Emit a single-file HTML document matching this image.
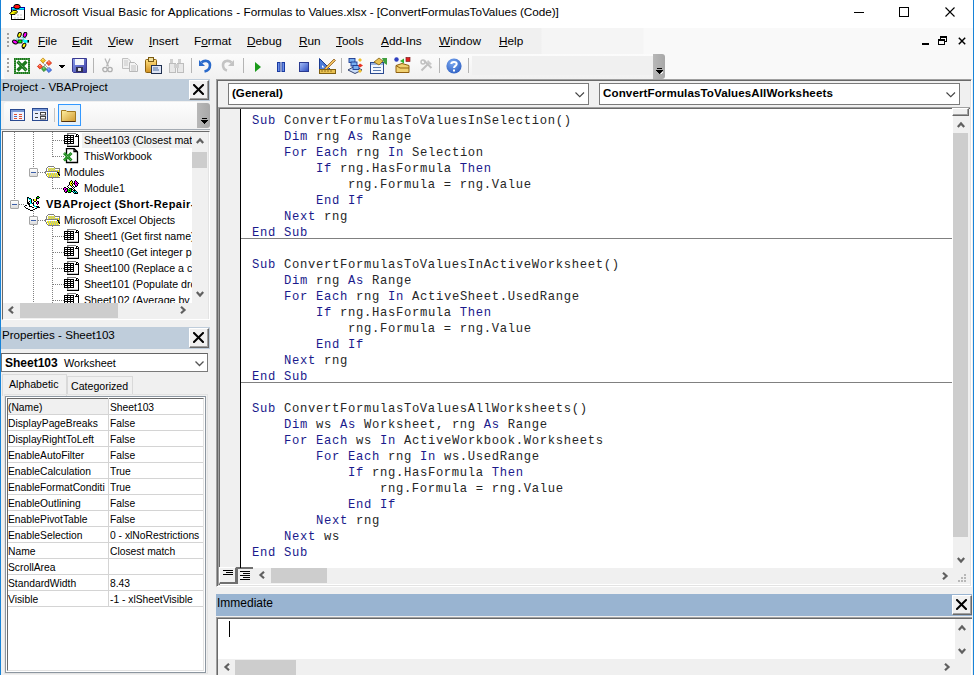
<!DOCTYPE html><html><head><meta charset="utf-8"><style>
*{margin:0;padding:0;box-sizing:border-box}
html,body{width:974px;height:675px;overflow:hidden;background:#f0f0f0}
body{position:relative;font-family:"Liberation Sans",sans-serif;font-size:12px;color:#000}
div,svg{position:absolute}
.t{white-space:pre;line-height:16px}
.s{font-size:10.3px}
.code{font-family:"Liberation Mono",monospace;font-size:12.2px;letter-spacing:0.68px;white-space:pre;line-height:16px;color:#262626}
.k{color:#1a1a8c}
u{text-decoration:underline;text-decoration-thickness:1px;text-underline-offset:1px}
.clip{overflow:hidden}
</style></head><body>
<div style="left:0px;top:0px;width:974px;height:28px;background:#fff"></div>
<div style="left:0px;top:0px;width:1px;height:675px;background:#1883d7"></div>
<div style="left:973px;top:0px;width:1px;height:675px;background:#1883d7"></div>
<div class="t" style="left:30px;top:4px;font-size:11.75px"><span style="letter-spacing:0.13px">Microsoft Visual Basic for Applications - </span><span style="letter-spacing:-0.04px">Formulas to Values.xlsx - [ConvertFormulasToValues (Code)]</span></div>
<div style="left:854px;top:12px;width:10px;height:1px;background:#000"></div>
<div style="left:899px;top:7px;width:10px;height:10px;border:1px solid #000"></div>
<svg style="left:945px;top:7px;" width="10" height="10" viewBox="0 0 10 10"><path d="M0.5 0.5L9.5 9.5M9.5 0.5L0.5 9.5" stroke="#000" stroke-width="1.1"/></svg>
<svg style="left:8px;top:3px;" width="18" height="18" viewBox="0 0 18 18"><rect x="3.5" y="4.5" width="13" height="12" fill="#fff" stroke="#000"/><rect x="3" y="4" width="14" height="3" fill="#0000a0"/><rect x="4" y="5" width="12" height="1.6" fill="#00ffff"/><circle cx="10" cy="12" r="0.7" fill="#b0b0b0"/><circle cx="13" cy="12" r="0.7" fill="#b0b0b0"/><circle cx="7" cy="15" r="0.7" fill="#b0b0b0"/><circle cx="10" cy="15" r="0.7" fill="#b0b0b0"/><circle cx="13" cy="15" r="0.7" fill="#b0b0b0"/><ellipse cx="9" cy="3.6" rx="3.2" ry="2.2" fill="#ff1010" stroke="#000" stroke-width="1"/><path d="M1.5 10.5L5 7.5H8.5L9.5 9L7 11.5H3Z" fill="#ffff00" stroke="#000" stroke-width="0.9"/><path d="M5 10L9 8.5L8 11Z" fill="#808000"/></svg>
<div style="left:1px;top:28px;width:972px;height:51px;background:#f9f9f9"></div>
<div style="left:1px;top:28px;width:643px;height:26px;background:linear-gradient(to right,#f0f0f0 0,#f0f0f0 540px,#f5f5f5 541px,#f5f5f5 642px,#f9f9f9 643px)"></div>
<div class="t" style="left:38px;top:33px;font-size:11.8px"><u>F</u>ile</div>
<div class="t" style="left:72px;top:33px;font-size:11.8px"><u>E</u>dit</div>
<div class="t" style="left:108px;top:33px;font-size:11.8px"><u>V</u>iew</div>
<div class="t" style="left:149px;top:33px;font-size:11.8px"><u>I</u>nsert</div>
<div class="t" style="left:194px;top:33px;font-size:11.8px">F<u>o</u>rmat</div>
<div class="t" style="left:247px;top:33px;font-size:11.8px"><u>D</u>ebug</div>
<div class="t" style="left:299px;top:33px;font-size:11.8px"><u>R</u>un</div>
<div class="t" style="left:336px;top:33px;font-size:11.8px"><u>T</u>ools</div>
<div class="t" style="left:381px;top:33px;font-size:11.8px"><u>A</u>dd-Ins</div>
<div class="t" style="left:439px;top:33px;font-size:11.8px"><u>W</u>indow</div>
<div class="t" style="left:499px;top:33px;font-size:11.8px"><u>H</u>elp</div>
<div style="left:7px;top:33px;width:2px;height:2px;background:#a0a0a0"></div>
<div style="left:7px;top:37px;width:2px;height:2px;background:#a0a0a0"></div>
<div style="left:7px;top:41px;width:2px;height:2px;background:#a0a0a0"></div>
<div style="left:7px;top:45px;width:2px;height:2px;background:#a0a0a0"></div>
<div style="left:922px;top:43px;width:7px;height:2px;background:#000"></div>
<svg style="left:938px;top:36px;" width="9" height="9" viewBox="0 0 9 9" shape-rendering="crispEdges"><path d="M2.5 2.5V0.5H8.5V5.5H6.5M2.5 1.5H8.5M0.5 3.5H6.5V8.5H0.5ZM0.5 4.5H6.5" stroke="#000" fill="none"/></svg>
<svg style="left:958px;top:37px;" width="8" height="8" viewBox="0 0 8 8"><path d="M0.8 0.8L7.2 7.2M7.2 0.8L0.8 7.2" stroke="#000" stroke-width="1.45"/></svg>
<svg style="left:12px;top:32px;" width="17" height="17" viewBox="0 0 17 17"><path d="M3 9L7 5M10 9L14 5M7 9H15M10 5L14 12" stroke="#00e0e0" stroke-width="1.4" stroke-dasharray="1 1"/><ellipse cx="7.5" cy="2.8" rx="1.6" ry="2.6" transform="rotate(20 7.5 2.8)" fill="#ffff00" stroke="#000" stroke-width="1"/><ellipse cx="13" cy="2.8" rx="1.6" ry="2.6" transform="rotate(20 13 2.8)" fill="#ff00ff" stroke="#000" stroke-width="1"/><ellipse cx="3" cy="10" rx="2.6" ry="1.7" transform="rotate(30 3 10)" fill="#ff00ff" stroke="#000" stroke-width="1"/><rect x="6" y="8" width="4" height="3" fill="#00ff00" stroke="#000" stroke-width="0.8"/><rect x="12" y="8" width="4" height="2.6" fill="#00ffff"/><rect x="15.5" y="8" width="1.5" height="2.6" fill="#000"/><ellipse cx="12" cy="13.5" rx="1.6" ry="2.4" transform="rotate(30 12 13.5)" fill="#ffff00" stroke="#000" stroke-width="1"/><rect x="10.5" y="15.5" width="2" height="1.5" fill="#000"/></svg>
<div style="left:4px;top:54px;width:649px;height:25px;background:linear-gradient(#fcfcfc,#f1f1f1);border-radius:3px 0 0 3px"></div>
<div style="left:472px;top:56px;width:181px;height:19px;background:#f0f0f0"></div>
<div style="left:653px;top:54px;width:12px;height:25px;background:linear-gradient(to right,#b8b8b8,#a8a8a8);border-radius:0 3px 3px 0"></div>
<svg style="left:656px;top:68px;" width="7" height="8" viewBox="0 0 7 8" shape-rendering="crispEdges"><rect x="1" y="0" width="5" height="1" fill="#000"/><path d="M0 2H7L3.5 6Z" fill="#000"/><path d="M4 6L7 3V5Z" fill="#fff"/></svg>
<div style="left:7px;top:58px;width:2px;height:2px;background:#a0a0a0"></div>
<div style="left:7px;top:62px;width:2px;height:2px;background:#a0a0a0"></div>
<div style="left:7px;top:66px;width:2px;height:2px;background:#a0a0a0"></div>
<div style="left:7px;top:70px;width:2px;height:2px;background:#a0a0a0"></div>
<div style="left:93px;top:58px;width:1px;height:15px;background:#b4b4b4"></div>
<div style="left:191px;top:58px;width:1px;height:15px;background:#b4b4b4"></div>
<div style="left:243px;top:58px;width:1px;height:15px;background:#b4b4b4"></div>
<div style="left:341px;top:58px;width:1px;height:15px;background:#b4b4b4"></div>
<div style="left:439px;top:58px;width:1px;height:15px;background:#b4b4b4"></div>
<div style="left:468px;top:58px;width:1px;height:15px;background:#b4b4b4"></div>
<svg style="left:14px;top:58px;" width="16" height="16" viewBox="0 0 16 16"><rect x="1" y="1" width="14" height="14" fill="#fff" stroke="#1a7a1a" stroke-width="2"/><rect x="1" y="1" width="14" height="14" fill="none" stroke="#fff" stroke-width="0.6" stroke-dasharray="1 1" opacity="0.7"/><path d="M3.5 3.5L12.5 12.5M12.5 3.5L3.5 12.5" stroke="#1a7a1a" stroke-width="3.2"/><path d="M4 4L12 12" stroke="#a0d0a0" stroke-width="0.8" stroke-dasharray="1 1"/></svg>
<svg style="left:36px;top:57px;" width="18" height="17" viewBox="0 0 18 17"><path d="M6 5L12 11M12 5L6 11" stroke="#909090" stroke-width="0.8"/><path d="M7 0.8999999999999999L9.6 3.5L7 6.1L4.4 3.5Z" fill="#f0c020" stroke="#c08000" stroke-width="0.7"/><rect x="6.2" y="1.9" width="1.2" height="1.2" fill="#fff" opacity="0.6"/><path d="M13 3.4L15.6 6L13 8.6L10.4 6Z" fill="#ff5030" stroke="#c02000" stroke-width="0.7"/><rect x="12.2" y="4.4" width="1.2" height="1.2" fill="#fff" opacity="0.6"/><path d="M4 6.9L6.6 9.5L4 12.1L1.4 9.5Z" fill="#ff5030" stroke="#c02000" stroke-width="0.7"/><rect x="3.2" y="7.9" width="1.2" height="1.2" fill="#fff" opacity="0.6"/><path d="M8 9.4L10.6 12L8 14.6L5.4 12Z" fill="#40b040" stroke="#207020" stroke-width="0.7"/><rect x="7.2" y="10.4" width="1.2" height="1.2" fill="#fff" opacity="0.6"/><path d="M13 10.4L15.6 13L13 15.6L10.4 13Z" fill="#5080f0" stroke="#2040b0" stroke-width="0.7"/><rect x="12.2" y="11.4" width="1.2" height="1.2" fill="#fff" opacity="0.6"/></svg>
<svg style="left:59px;top:65px;" width="6" height="4" viewBox="0 0 6 4" shape-rendering="crispEdges"><path d="M0 0H6V1H5V2H4V3H2V2H1V1H0Z" fill="#000"/></svg>
<svg style="left:72px;top:58px;" width="15" height="15" viewBox="0 0 15 15"><defs><linearGradient id="fl" x1="0" y1="0" x2="1" y2="1"><stop offset="0" stop-color="#8aa0f0"/><stop offset="1" stop-color="#3a3aa0"/></linearGradient></defs><path d="M0.5 0.5H14.5V14.5H1.5L0.5 13.5Z" fill="url(#fl)" stroke="#3a3a90"/><rect x="3" y="1" width="9" height="6" fill="#f4f6fb"/><rect x="4" y="9" width="7" height="5" fill="#303050"/><rect x="6" y="10" width="3" height="3" fill="#e0e0e0"/></svg>
<svg style="left:102px;top:58px;" width="11" height="15" viewBox="0 0 11 15"><path d="M3 0.5L6.5 8.5M8 0.5L4.5 8.5" stroke="#b8b8b8" stroke-width="1.3" fill="none"/><circle cx="3" cy="11.5" r="2.2" fill="none" stroke="#b0b0b0" stroke-width="1.3"/><circle cx="8" cy="11.5" r="2.2" fill="none" stroke="#b0b0b0" stroke-width="1.3"/></svg>
<svg style="left:122px;top:58px;" width="16" height="14" viewBox="0 0 16 14"><path d="M0.5 0.5H6L8.5 3V10.5H0.5Z" fill="#f0f0f0" stroke="#c0c0c0"/><path d="M2 3H6M2 5H6M2 7H6" stroke="#c8c8c8"/><path d="M7.5 4.5H12.5L15.5 7.5V13.5H7.5Z" fill="#f4f4f4" stroke="#b8b8b8"/><path d="M9 8H14M9 10H14M9 12H14" stroke="#c0c0c0"/></svg>
<svg style="left:145px;top:57px;" width="17" height="17" viewBox="0 0 17 17"><defs><linearGradient id="pc" x1="0" y1="0" x2="0" y2="1"><stop offset="0" stop-color="#ffe080"/><stop offset="1" stop-color="#d09020"/></linearGradient></defs><rect x="0.5" y="2.5" width="11" height="13" rx="1" fill="url(#pc)" stroke="#8a6010"/><rect x="3.5" y="0.5" width="5" height="4" fill="#f0e0a0" stroke="#7a5a10"/><rect x="6.5" y="8.5" width="10" height="8" fill="#dde4f4" stroke="#203050"/><path d="M8 11H13M8 13H14" stroke="#5070a0"/></svg>
<svg style="left:169px;top:58px;" width="16" height="15" viewBox="0 0 16 15"><rect x="1" y="1" width="3" height="4" fill="#d0d0d0"/><rect x="9" y="1" width="3" height="4" fill="#d0d0d0"/><rect x="0.5" y="5.5" width="6" height="9" fill="#e8e8e8" stroke="#bdbdbd"/><rect x="8.5" y="5.5" width="6" height="9" fill="#e8e8e8" stroke="#bdbdbd"/><rect x="5" y="6" width="5" height="4" fill="#cfcfcf"/></svg>
<svg style="left:199px;top:59px;" width="13" height="14" viewBox="0 0 13 14"><path d="M2.5 3.5C5 1 11 1 11 6C11 10 8 12 5.5 12.5" stroke="#2a6acb" stroke-width="2.6" fill="none"/><path d="M0 1V7H6Z" fill="#2a6acb"/></svg>
<svg style="left:221px;top:59px;" width="13" height="13" viewBox="0 0 13 13"><path d="M10.5 3.5C8 1 2 1 2 6C2 9 4 11 6 11.5" stroke="#c4c4c4" stroke-width="2.6" fill="none"/><path d="M13 1V7H7Z" fill="#c4c4c4"/></svg>
<svg style="left:255px;top:62px;shape-rendering:auto" width="6" height="10" viewBox="0 0 6 10" shape-rendering="crispEdges"><path d="M0 0L6 5L0 10Z" fill="#1a9a1a"/></svg>
<svg style="left:277px;top:62px;" width="8" height="10" viewBox="0 0 8 10"><rect x="0.5" y="0.5" width="2.5" height="9" fill="#6a8ee8" stroke="#1a3aa0"/><rect x="5" y="0.5" width="2.5" height="9" fill="#6a8ee8" stroke="#1a3aa0"/></svg>
<svg style="left:299px;top:62px;" width="10" height="10" viewBox="0 0 10 10"><defs><linearGradient id="st" x1="0" y1="0" x2="1" y2="1"><stop offset="0" stop-color="#a8c0f8"/><stop offset="1" stop-color="#2a4ac0"/></linearGradient></defs><rect x="0.5" y="0.5" width="9" height="9" fill="url(#st)" stroke="#2a3a90"/></svg>
<svg style="left:319px;top:57px;" width="17" height="17" viewBox="0 0 17 17"><path d="M0.5 1.5V12.5H11.5Z" fill="#4a7ad8" stroke="#1a3a90"/><path d="M3 8V10.5H5.5Z" fill="#fff"/><path d="M6 11L15 2L16.5 3.5L7.5 12.5L5.5 13Z" fill="#f0c060" stroke="#906020" stroke-width="0.8"/><rect x="0.5" y="12.5" width="16" height="4" fill="#e8c050" stroke="#806010"/><path d="M3 13V15M6 13V15M9 13V15M12 13V15" stroke="#806010" stroke-width="0.8"/></svg>
<svg style="left:347px;top:57px;" width="17" height="17" viewBox="0 0 17 17"><path d="M1 13L8 9L15 13L8 16.5Z" fill="#c8dcf8" stroke="#203060" stroke-width="0.9"/><rect x="2" y="1.5" width="6" height="4" fill="#7ab0f0" stroke="#1a3a90" stroke-width="0.9"/><rect x="4" y="5" width="6" height="4" fill="#7ab0f0" stroke="#1a3a90" stroke-width="0.9"/><rect x="6" y="8.5" width="6" height="4" fill="#7ab0f0" stroke="#1a3a90" stroke-width="0.9"/><path d="M13 1L15 3L13 5L11 3Z" fill="#f0c030"/><path d="M13 12L15 14L13 16L11 14Z" fill="#f0c030"/><path d="M13 6.5L16 8.5L13 10.5L11 8.5Z" fill="#e83020"/></svg>
<svg style="left:370px;top:57px;" width="18" height="17" viewBox="0 0 18 17"><rect x="0.5" y="5.5" width="13" height="11" fill="#f4f8ff" stroke="#2a4a90"/><rect x="1" y="6" width="12" height="2" fill="#9ab4e0"/><path d="M3 10.5H11M3 13.5H11" stroke="#5a7ab0"/><path d="M4 5L9 1L13 4L9 8Z" fill="#e8c050" stroke="#806010" stroke-width="0.8"/><path d="M12 1H17V8L14 6Z" fill="#40a040"/></svg>
<svg style="left:394px;top:57px;" width="17" height="17" viewBox="0 0 17 17"><circle cx="2.5" cy="2.5" r="2.2" fill="#3040c0"/><path d="M10 1.5L6 4L10 6.5Z" fill="#30b030"/><rect x="12" y="0.5" width="4" height="4" fill="#e02020" stroke="#802020" stroke-width="0.7"/><path d="M2 8.5L8 6.5L15 8.5V15.5H2Z" fill="#f0d070" stroke="#906010"/><path d="M2 8.5L6 11H15" stroke="#906010" fill="none"/></svg>
<svg style="left:420px;top:59px;" width="13" height="13" viewBox="0 0 13 13"><path d="M1.5 11.5L9 4M4 1.5L11.5 9" stroke="#c0c0c0" stroke-width="2"/><path d="M8 1L12 5L10 6L7 3Z" fill="#c8c8c8"/><circle cx="3" cy="3" r="2" fill="none" stroke="#c0c0c0" stroke-width="1.5"/></svg>
<svg style="left:446px;top:58px;" width="16" height="16" viewBox="0 0 16 16"><defs><radialGradient id="hg" cx="0.4" cy="0.3" r="0.8"><stop offset="0" stop-color="#7aa8f0"/><stop offset="1" stop-color="#2a5cc0"/></radialGradient></defs><circle cx="8" cy="8" r="7.6" fill="url(#hg)"/><path d="M5.3 6C5.3 3.2 10.7 3.2 10.7 6C10.7 7.8 8 8 8 10" stroke="#fff" stroke-width="2" fill="none"/><rect x="7" y="11.5" width="2" height="2" fill="#fff"/></svg>
<div style="left:1px;top:79px;width:209px;height:22px;background:#bfcddb"></div>
<div class="t" style="left:2px;top:79px;font-size:11.6px">Project - VBAProject</div>
<div style="left:189px;top:80px;width:20px;height:20px;background:#f0f0f0;border-top:1px solid #fff;border-left:1px solid #fff;border-right:1px solid #696969;border-bottom:1px solid #696969;box-shadow:inset -1px -1px 0 #a0a0a0"></div>
<svg style="left:193px;top:84px;" width="11" height="11" viewBox="0 0 11 11"><path d="M1 1L10 10M10 1L1 10" stroke="#000" stroke-width="2" stroke-linecap="square"/></svg>
<div style="left:4px;top:102px;width:193px;height:27px;background:linear-gradient(#fdfdfd,#f1f1f1);border-radius:3px 0 0 3px"></div>
<div style="left:197px;top:103px;width:13px;height:25px;background:linear-gradient(to right,#b8b8b8,#a8a8a8);border-radius:0 3px 3px 0"></div>
<svg style="left:201px;top:118px;" width="7" height="8" viewBox="0 0 7 8" shape-rendering="crispEdges"><rect x="1" y="0" width="5" height="1" fill="#000"/><path d="M0 2H7L3.5 6Z" fill="#000"/></svg>
<div style="left:54px;top:108px;width:1px;height:14px;background:#c5c5c5"></div>
<div style="left:58px;top:104px;width:23px;height:22px;background:#e5f1fb;border:1px solid #3399ff"></div>
<div style="left:1px;top:129px;width:209px;height:1px;background:#a3aab2"></div>
<svg style="left:10px;top:109px;" width="15" height="12" viewBox="0 0 15 12"><rect x="0.5" y="0.5" width="14" height="11" fill="#f0f4ff" stroke="#2a4a90"/><rect x="1" y="1" width="13" height="2" fill="#7a9ad8"/><rect x="1" y="3" width="2" height="8" fill="#a8bce8"/><path d="M4 5.5H7M9 5.5H12M4 7.5H7M9 7.5H12M4 9.5H7M9 9.5H12" stroke="#e05030"/><path d="M4 7.5H7" stroke="#5070c0"/></svg>
<svg style="left:32px;top:108px;" width="16" height="13" viewBox="0 0 16 13"><rect x="0.5" y="0.5" width="15" height="12" fill="#e8eefc" stroke="#2a4a90"/><rect x="1" y="1" width="14" height="2" fill="#7a9ad8"/><path d="M3 5.5H6M3 9.5H6" stroke="#404040"/><rect x="8.5" y="4.5" width="5" height="2.5" fill="#fff" stroke="#404040"/><rect x="8.5" y="8.5" width="5" height="2.5" fill="#fff" stroke="#404040"/></svg>
<svg style="left:61px;top:109px;" width="16" height="13" viewBox="0 0 16 13"><defs><linearGradient id="fg" x1="0" y1="0" x2="1" y2="1"><stop offset="0" stop-color="#fff0a0"/><stop offset="1" stop-color="#d09a30"/></linearGradient></defs><path d="M0.5 1.5H5L6 2.5H14.5V12.5H0.5Z" fill="url(#fg)" stroke="#a07820"/><path d="M0.5 12.5H14.5" stroke="#503010"/></svg>
<div style="left:2px;top:131px;width:208px;height:189px;background:#fff;border-top:1px solid #696969;border-left:1px solid #696969;border-right:1px solid #fff;border-bottom:1px solid #fff;box-shadow:inset -1px -1px 0 #e3e3e3"></div>
<div style="left:1px;top:327px;width:209px;height:22px;background:#bfcddb"></div>
<div class="t" style="left:2px;top:327px;font-size:11.6px">Properties - Sheet103</div>
<div style="left:189px;top:328px;width:20px;height:20px;background:#f0f0f0;border-top:1px solid #fff;border-left:1px solid #fff;border-right:1px solid #696969;border-bottom:1px solid #696969;box-shadow:inset -1px -1px 0 #a0a0a0"></div>
<svg style="left:193px;top:332px;" width="11" height="11" viewBox="0 0 11 11"><path d="M1 1L10 10M10 1L1 10" stroke="#000" stroke-width="2" stroke-linecap="square"/></svg>
<div style="left:1px;top:353px;width:207px;height:19px;background:#fff;border:1px solid #7a7a7a;border-top-color:#646464"></div>
<div class="t" style="left:5px;top:355px;font-size:12px"><b>Sheet103</b></div>
<div class="t" style="left:64px;top:355px;font-size:10.9px">Worksheet</div>
<svg style="left:195px;top:361px;" width="9" height="6" viewBox="0 0 9 6"><path d="M0.5 0.5L4.5 4.5L8.5 0.5" stroke="#555" fill="none" stroke-width="1.3"/></svg>
<div style="left:67px;top:376px;width:66px;height:19px;background:#f0f0f0;border:1px solid #d9d9d9;border-bottom:none"></div>
<div style="left:2px;top:374px;width:65px;height:22px;background:#f0f0f0;border:1px solid #d9d9d9;border-bottom:none;border-right:1px solid #d9d9d9"></div>
<div class="t" style="left:9px;top:376px;font-size:10.6px">Alphabetic</div>
<div class="t" style="left:71px;top:378px;font-size:10.6px">Categorized</div>
<div style="left:4px;top:394px;width:204px;height:280px;border:1px solid #e3e3e3"></div>
<div style="left:5px;top:396px;width:201px;height:277px;background:#fff;border:1px solid #8c96a0"></div>
<div style="left:7px;top:398px;width:197px;height:273px;border-top:1px solid #696969;border-left:1px solid #696969;border-right:1px solid #e3e3e3;border-bottom:1px solid #e3e3e3"></div>
<div style="left:8px;top:399px;width:100px;height:15px;background:#f0f0f0"></div>
<div style="left:8px;top:414px;width:195px;height:1px;background:#d4d4d4"></div>
<div class="t" style="left:8px;top:399px;font-size:10.3px;width:99px;overflow:hidden;height:15px;line-height:18px">(Name)</div>
<div class="t" style="left:110px;top:399px;font-size:10.3px;width:93px;overflow:hidden;height:15px;line-height:18px">Sheet103</div>
<div style="left:8px;top:430px;width:195px;height:1px;background:#d4d4d4"></div>
<div class="t" style="left:8px;top:415px;font-size:10.3px;width:99px;overflow:hidden;height:15px;line-height:18px">DisplayPageBreaks</div>
<div class="t" style="left:110px;top:415px;font-size:10.3px;width:93px;overflow:hidden;height:15px;line-height:18px">False</div>
<div style="left:8px;top:446px;width:195px;height:1px;background:#d4d4d4"></div>
<div class="t" style="left:8px;top:431px;font-size:10.3px;width:99px;overflow:hidden;height:15px;line-height:18px">DisplayRightToLeft</div>
<div class="t" style="left:110px;top:431px;font-size:10.3px;width:93px;overflow:hidden;height:15px;line-height:18px">False</div>
<div style="left:8px;top:462px;width:195px;height:1px;background:#d4d4d4"></div>
<div class="t" style="left:8px;top:447px;font-size:10.3px;width:99px;overflow:hidden;height:15px;line-height:18px">EnableAutoFilter</div>
<div class="t" style="left:110px;top:447px;font-size:10.3px;width:93px;overflow:hidden;height:15px;line-height:18px">False</div>
<div style="left:8px;top:478px;width:195px;height:1px;background:#d4d4d4"></div>
<div class="t" style="left:8px;top:463px;font-size:10.3px;width:99px;overflow:hidden;height:15px;line-height:18px">EnableCalculation</div>
<div class="t" style="left:110px;top:463px;font-size:10.3px;width:93px;overflow:hidden;height:15px;line-height:18px">True</div>
<div style="left:8px;top:494px;width:195px;height:1px;background:#d4d4d4"></div>
<div class="t" style="left:8px;top:479px;font-size:10.3px;width:99px;overflow:hidden;height:15px;line-height:18px">EnableFormatConditi</div>
<div class="t" style="left:110px;top:479px;font-size:10.3px;width:93px;overflow:hidden;height:15px;line-height:18px">True</div>
<div style="left:8px;top:510px;width:195px;height:1px;background:#d4d4d4"></div>
<div class="t" style="left:8px;top:495px;font-size:10.3px;width:99px;overflow:hidden;height:15px;line-height:18px">EnableOutlining</div>
<div class="t" style="left:110px;top:495px;font-size:10.3px;width:93px;overflow:hidden;height:15px;line-height:18px">False</div>
<div style="left:8px;top:526px;width:195px;height:1px;background:#d4d4d4"></div>
<div class="t" style="left:8px;top:511px;font-size:10.3px;width:99px;overflow:hidden;height:15px;line-height:18px">EnablePivotTable</div>
<div class="t" style="left:110px;top:511px;font-size:10.3px;width:93px;overflow:hidden;height:15px;line-height:18px">False</div>
<div style="left:8px;top:542px;width:195px;height:1px;background:#d4d4d4"></div>
<div class="t" style="left:8px;top:527px;font-size:10.3px;width:99px;overflow:hidden;height:15px;line-height:18px">EnableSelection</div>
<div class="t" style="left:110px;top:527px;font-size:10.3px;width:93px;overflow:hidden;height:15px;line-height:18px">0 - xlNoRestrictions</div>
<div style="left:8px;top:558px;width:195px;height:1px;background:#d4d4d4"></div>
<div class="t" style="left:8px;top:543px;font-size:10.3px;width:99px;overflow:hidden;height:15px;line-height:18px">Name</div>
<div class="t" style="left:110px;top:543px;font-size:10.3px;width:93px;overflow:hidden;height:15px;line-height:18px">Closest match</div>
<div style="left:8px;top:574px;width:195px;height:1px;background:#d4d4d4"></div>
<div class="t" style="left:8px;top:559px;font-size:10.3px;width:99px;overflow:hidden;height:15px;line-height:18px">ScrollArea</div>
<div class="t" style="left:110px;top:559px;font-size:10.3px;width:93px;overflow:hidden;height:15px;line-height:18px"></div>
<div style="left:8px;top:590px;width:195px;height:1px;background:#d4d4d4"></div>
<div class="t" style="left:8px;top:575px;font-size:10.3px;width:99px;overflow:hidden;height:15px;line-height:18px">StandardWidth</div>
<div class="t" style="left:110px;top:575px;font-size:10.3px;width:93px;overflow:hidden;height:15px;line-height:18px">8.43</div>
<div style="left:8px;top:606px;width:195px;height:1px;background:#d4d4d4"></div>
<div class="t" style="left:8px;top:591px;font-size:10.3px;width:99px;overflow:hidden;height:15px;line-height:18px">Visible</div>
<div class="t" style="left:110px;top:591px;font-size:10.3px;width:93px;overflow:hidden;height:15px;line-height:18px">-1 - xlSheetVisible</div>
<div style="left:108px;top:398px;width:1px;height:208px;background:#d4d4d4"></div>
<div style="left:216px;top:79px;width:756px;height:508px;background:#f0f0f0;border-top:1px solid #a0a0a0;border-left:1px solid #a0a0a0;border-right:1px solid #fff;border-bottom:1px solid #fff;box-shadow:inset 1px 1px 0 #696969,inset -1px -1px 0 #e3e3e3"></div>
<div style="left:228px;top:83px;width:361px;height:22px;background:#fff;border:1px solid #7a7a7a"></div>
<div class="t" style="left:232px;top:85px;font-size:11.6px;font-weight:bold;line-height:16px;letter-spacing:0px">(General)</div>
<svg style="left:575px;top:92px;" width="10" height="6" viewBox="0 0 10 6"><path d="M0.5 0.5L4.75 4.75L9 0.5" stroke="#444" fill="none" stroke-width="1.1"/></svg>
<div style="left:599px;top:83px;width:361px;height:22px;background:#fff;border:1px solid #7a7a7a"></div>
<div class="t" style="left:603px;top:85px;font-size:11.6px;font-weight:bold;line-height:16px;letter-spacing:0.1px">ConvertFormulasToValuesAllWorksheets</div>
<svg style="left:946px;top:92px;" width="10" height="6" viewBox="0 0 10 6"><path d="M0.5 0.5L4.75 4.75L9 0.5" stroke="#444" fill="none" stroke-width="1.1"/></svg>
<div style="left:218px;top:107px;width:752px;height:478px;background:#fff;border-top:1px solid #a0a0a0;border-left:1px solid #a0a0a0;box-shadow:inset 1px 1px 0 #696969"></div>
<div style="left:220px;top:109px;width:20px;height:459px;background:#f0f0f0"></div>
<div style="left:240px;top:109px;width:1px;height:459px;background:#000"></div>
<div class="code" style="left:252px;top:113px;"><span class="k">Sub</span> ConvertFormulasToValuesInSelection()</div>
<div class="code" style="left:252px;top:129px;">    <span class="k">Dim</span> rng <span class="k">As</span> Range</div>
<div class="code" style="left:252px;top:145px;">    <span class="k">For</span> <span class="k">Each</span> rng <span class="k">In</span> Selection</div>
<div class="code" style="left:252px;top:161px;">        <span class="k">If</span> rng.HasFormula <span class="k">Then</span></div>
<div class="code" style="left:252px;top:177px;">            rng.Formula = rng.Value</div>
<div class="code" style="left:252px;top:193px;">        <span class="k">End</span> <span class="k">If</span></div>
<div class="code" style="left:252px;top:209px;">    <span class="k">Next</span> rng</div>
<div class="code" style="left:252px;top:225px;"><span class="k">End</span> <span class="k">Sub</span></div>
<div class="code" style="left:252px;top:257px;"><span class="k">Sub</span> ConvertFormulasToValuesInActiveWorksheet()</div>
<div class="code" style="left:252px;top:273px;">    <span class="k">Dim</span> rng <span class="k">As</span> Range</div>
<div class="code" style="left:252px;top:289px;">    <span class="k">For</span> <span class="k">Each</span> rng <span class="k">In</span> ActiveSheet.UsedRange</div>
<div class="code" style="left:252px;top:305px;">        <span class="k">If</span> rng.HasFormula <span class="k">Then</span></div>
<div class="code" style="left:252px;top:321px;">            rng.Formula = rng.Value</div>
<div class="code" style="left:252px;top:337px;">        <span class="k">End</span> <span class="k">If</span></div>
<div class="code" style="left:252px;top:353px;">    <span class="k">Next</span> rng</div>
<div class="code" style="left:252px;top:369px;"><span class="k">End</span> <span class="k">Sub</span></div>
<div class="code" style="left:252px;top:401px;"><span class="k">Sub</span> ConvertFormulasToValuesAllWorksheets()</div>
<div class="code" style="left:252px;top:417px;">    <span class="k">Dim</span> ws <span class="k">As</span> Worksheet, rng <span class="k">As</span> Range</div>
<div class="code" style="left:252px;top:433px;">    <span class="k">For</span> <span class="k">Each</span> ws <span class="k">In</span> ActiveWorkbook.Worksheets</div>
<div class="code" style="left:252px;top:449px;">        <span class="k">For</span> <span class="k">Each</span> rng <span class="k">In</span> ws.UsedRange</div>
<div class="code" style="left:252px;top:465px;">            <span class="k">If</span> rng.HasFormula <span class="k">Then</span></div>
<div class="code" style="left:252px;top:481px;">                rng.Formula = rng.Value</div>
<div class="code" style="left:252px;top:497px;">            <span class="k">End</span> <span class="k">If</span></div>
<div class="code" style="left:252px;top:513px;">        <span class="k">Next</span> rng</div>
<div class="code" style="left:252px;top:529px;">    <span class="k">Next</span> ws</div>
<div class="code" style="left:252px;top:545px;"><span class="k">End</span> <span class="k">Sub</span></div>
<div style="left:241px;top:238px;width:711px;height:1px;background:#808080"></div>
<div style="left:241px;top:382px;width:711px;height:1px;background:#808080"></div>
<div style="left:953px;top:109px;width:17px;height:459px;background:#f0f0f0"></div>
<div style="left:952px;top:108px;width:17px;height:8px;background:#f0f0f0;border-top:1px solid #fff;border-left:1px solid #fff;border-right:1px solid #696969;border-bottom:1px solid #696969;box-shadow:inset -1px -1px 0 #a0a0a0"></div>
<div style="left:953px;top:133px;width:15px;height:404px;background:#cdcdcd"></div>
<svg style="left:957px;top:121px;" width="8" height="8" viewBox="0 0 8 8"><path d="M0.8 6L4 2.5L7.2 6" stroke="#606060" fill="none" stroke-width="2.2"/></svg>
<svg style="left:957px;top:556px;" width="8" height="8" viewBox="0 0 8 8"><path d="M0.8 2L4 5.5L7.2 2" stroke="#606060" fill="none" stroke-width="2.2"/></svg>
<div style="left:220px;top:568px;width:750px;height:16px;background:#f0f0f0"></div>
<div style="left:219px;top:567px;width:18px;height:17px;background:#f0f0f0;border-top:1px solid #fff;border-left:1px solid #fff;border-right:2px solid #707070;border-bottom:2px solid #707070"></div>
<div style="left:236px;top:567px;width:17px;height:17px;background:#f0f0f0;border-top:2px solid #707070;border-left:2px solid #707070"></div>
<div style="left:240px;top:567px;width:1px;height:1px;background:#000"></div>
<svg style="left:223px;top:570px;" width="10" height="5" viewBox="0 0 10 5" shape-rendering="crispEdges"><rect x="0" y="0" width="10" height="1" fill="#000"/><rect x="3" y="2" width="7" height="1" fill="#000"/><rect x="0" y="4" width="10" height="1" fill="#000"/></svg>
<svg style="left:240px;top:571px;" width="10" height="9" viewBox="0 0 10 9" shape-rendering="crispEdges"><rect x="0" y="0" width="10" height="1" fill="#000"/><rect x="3" y="2" width="7" height="1" fill="#000"/><rect x="0" y="4" width="10" height="1" fill="#000"/><rect x="3" y="6" width="7" height="1" fill="#000"/><rect x="0" y="8" width="10" height="1" fill="#000"/></svg>
<svg style="left:258px;top:571px;" width="8" height="8" viewBox="0 0 8 8"><path d="M6 0.8L2.5 4L6 7.2" stroke="#606060" fill="none" stroke-width="2.2"/></svg>
<svg style="left:941px;top:572px;" width="8" height="8" viewBox="0 0 8 8"><path d="M2 0.8L5.5 4L2 7.2" stroke="#606060" fill="none" stroke-width="2.2"/></svg>
<div style="left:271px;top:568px;width:56px;height:15px;background:#cdcdcd"></div>
<div style="left:964px;top:574px;width:2px;height:2px;background:#b8b8b8"></div>
<div style="left:961px;top:577px;width:2px;height:2px;background:#b8b8b8"></div>
<div style="left:964px;top:577px;width:2px;height:2px;background:#b8b8b8"></div>
<div style="left:958px;top:580px;width:2px;height:2px;background:#b8b8b8"></div>
<div style="left:961px;top:580px;width:2px;height:2px;background:#b8b8b8"></div>
<div style="left:964px;top:580px;width:2px;height:2px;background:#b8b8b8"></div>
<div class="clip" style="left:3px;top:132px;width:189px;height:171px">
<div style="left:79px;top:1px;width:115px;height:15px;background:#f0f0f0"></div>
<div style="left:11px;top:0px;width:1px;height:68px;background:repeating-linear-gradient(#808080 0,#808080 1px,transparent 1px,transparent 2px)"></div>
<div style="left:30px;top:0px;width:1px;height:36px;background:repeating-linear-gradient(#808080 0,#808080 1px,transparent 1px,transparent 2px)"></div>
<div style="left:49px;top:0px;width:1px;height:25px;background:repeating-linear-gradient(#808080 0,#808080 1px,transparent 1px,transparent 2px)"></div>
<div style="left:50px;top:8px;width:11px;height:1px;background:repeating-linear-gradient(to right,#808080 0,#808080 1px,transparent 1px,transparent 2px)"></div>
<div style="left:50px;top:24px;width:11px;height:1px;background:repeating-linear-gradient(to right,#808080 0,#808080 1px,transparent 1px,transparent 2px)"></div>
<div style="left:26px;top:36px;width:9px;height:9px;border:1px solid #a5a5a5;border-radius:1px;background:linear-gradient(#fff,#dcdcdc)"></div>
<div style="left:28px;top:40px;width:5px;height:1px;background:#3c5fa8"></div>
<div style="left:35px;top:40px;width:7px;height:1px;background:repeating-linear-gradient(to right,#808080 0,#808080 1px,transparent 1px,transparent 2px)"></div>
<div style="left:49px;top:46px;width:1px;height:11px;background:repeating-linear-gradient(#808080 0,#808080 1px,transparent 1px,transparent 2px)"></div>
<div style="left:50px;top:56px;width:11px;height:1px;background:repeating-linear-gradient(to right,#808080 0,#808080 1px,transparent 1px,transparent 2px)"></div>
<div style="left:7px;top:68px;width:9px;height:9px;border:1px solid #a5a5a5;border-radius:1px;background:linear-gradient(#fff,#dcdcdc)"></div>
<div style="left:9px;top:72px;width:5px;height:1px;background:#3c5fa8"></div>
<div style="left:16px;top:72px;width:6px;height:1px;background:repeating-linear-gradient(to right,#808080 0,#808080 1px,transparent 1px,transparent 2px)"></div>
<div style="left:30px;top:79px;width:1px;height:5px;background:repeating-linear-gradient(#808080 0,#808080 1px,transparent 1px,transparent 2px)"></div>
<div style="left:26px;top:84px;width:9px;height:9px;border:1px solid #a5a5a5;border-radius:1px;background:linear-gradient(#fff,#dcdcdc)"></div>
<div style="left:28px;top:88px;width:5px;height:1px;background:#3c5fa8"></div>
<div style="left:35px;top:88px;width:7px;height:1px;background:repeating-linear-gradient(to right,#808080 0,#808080 1px,transparent 1px,transparent 2px)"></div>
<div style="left:49px;top:94px;width:1px;height:77px;background:repeating-linear-gradient(#808080 0,#808080 1px,transparent 1px,transparent 2px)"></div>
<div style="left:30px;top:93px;width:1px;height:78px;background:repeating-linear-gradient(#808080 0,#808080 1px,transparent 1px,transparent 2px)"></div>
<div style="left:50px;top:104px;width:11px;height:1px;background:repeating-linear-gradient(to right,#808080 0,#808080 1px,transparent 1px,transparent 2px)"></div>
<div style="left:50px;top:120px;width:11px;height:1px;background:repeating-linear-gradient(to right,#808080 0,#808080 1px,transparent 1px,transparent 2px)"></div>
<div style="left:50px;top:136px;width:11px;height:1px;background:repeating-linear-gradient(to right,#808080 0,#808080 1px,transparent 1px,transparent 2px)"></div>
<div style="left:50px;top:152px;width:11px;height:1px;background:repeating-linear-gradient(to right,#808080 0,#808080 1px,transparent 1px,transparent 2px)"></div>
<div style="left:50px;top:168px;width:11px;height:1px;background:repeating-linear-gradient(to right,#808080 0,#808080 1px,transparent 1px,transparent 2px)"></div>
<svg style="left:60px;top:1px;" width="16" height="14" viewBox="0 0 16 14" shape-rendering="crispEdges"><rect x="4" y="0" width="9" height="1" fill="#808080"/><rect x="4" y="1" width="1" height="1" fill="#808080"/><rect x="5" y="1" width="1" height="1" fill="#c8c8c8"/><rect x="13" y="1" width="2" height="1" fill="#000"/><rect x="1" y="2" width="10" height="1" fill="#000"/><rect x="13" y="2" width="1" height="1" fill="#000"/><rect x="14" y="2" width="1" height="1" fill="#fff"/><rect x="15" y="2" width="1" height="1" fill="#000"/><rect x="1" y="3" width="1" height="1" fill="#000"/><rect x="2" y="3" width="2" height="1" fill="#fff"/><rect x="4" y="3" width="1" height="1" fill="#000"/><rect x="5" y="3" width="2" height="1" fill="#fff"/><rect x="7" y="3" width="1" height="1" fill="#000"/><rect x="8" y="3" width="2" height="1" fill="#fff"/><rect x="10" y="3" width="1" height="1" fill="#000"/><rect x="12" y="3" width="4" height="1" fill="#000"/><rect x="1" y="4" width="10" height="1" fill="#000"/><rect x="15" y="4" width="1" height="1" fill="#000"/><rect x="1" y="5" width="1" height="1" fill="#000"/><rect x="2" y="5" width="2" height="1" fill="#fff"/><rect x="4" y="5" width="1" height="1" fill="#000"/><rect x="5" y="5" width="2" height="1" fill="#fff"/><rect x="7" y="5" width="1" height="1" fill="#000"/><rect x="8" y="5" width="2" height="1" fill="#fff"/><rect x="10" y="5" width="1" height="1" fill="#000"/><rect x="15" y="5" width="1" height="1" fill="#000"/><rect x="1" y="6" width="10" height="1" fill="#000"/><rect x="15" y="6" width="1" height="1" fill="#000"/><rect x="1" y="7" width="1" height="1" fill="#000"/><rect x="2" y="7" width="2" height="1" fill="#fff"/><rect x="4" y="7" width="1" height="1" fill="#000"/><rect x="5" y="7" width="2" height="1" fill="#fff"/><rect x="7" y="7" width="1" height="1" fill="#000"/><rect x="8" y="7" width="2" height="1" fill="#fff"/><rect x="10" y="7" width="1" height="1" fill="#000"/><rect x="15" y="7" width="1" height="1" fill="#000"/><rect x="1" y="8" width="10" height="1" fill="#000"/><rect x="15" y="8" width="1" height="1" fill="#000"/><rect x="1" y="9" width="1" height="1" fill="#000"/><rect x="2" y="9" width="2" height="1" fill="#fff"/><rect x="4" y="9" width="1" height="1" fill="#000"/><rect x="5" y="9" width="2" height="1" fill="#fff"/><rect x="7" y="9" width="1" height="1" fill="#000"/><rect x="8" y="9" width="2" height="1" fill="#fff"/><rect x="10" y="9" width="1" height="1" fill="#000"/><rect x="15" y="9" width="1" height="1" fill="#000"/><rect x="1" y="10" width="10" height="1" fill="#000"/><rect x="15" y="10" width="1" height="1" fill="#000"/><rect x="4" y="11" width="1" height="1" fill="#808080"/><rect x="5" y="11" width="1" height="1" fill="#c8c8c8"/><rect x="15" y="11" width="1" height="1" fill="#000"/><rect x="4" y="12" width="1" height="1" fill="#808080"/><rect x="5" y="12" width="10" height="1" fill="#c8c8c8"/><rect x="15" y="12" width="1" height="1" fill="#000"/><rect x="4" y="13" width="12" height="1" fill="#000"/></svg>
<svg style="left:60px;top:16px;" width="16" height="16" viewBox="0 0 16 16"><path d="M3.5 0.5H11L14.5 4V14.5H3.5Z" fill="#fff" stroke="#000" stroke-width="1.3"/><path d="M11 0.5V3.5H14.5" fill="none" stroke="#000" stroke-width="1.3"/><path d="M1 5L8.5 12.5M8.5 5L1 12.5" stroke="#1a8a1a" stroke-width="2.8"/><path d="M1.5 5.5L8 12M8 5.5L1.5 12" stroke="#fff" stroke-width="0.7" stroke-dasharray="0.8 1.2" opacity="0.8"/></svg>
<svg style="left:42px;top:34px;" width="15" height="12" viewBox="0 0 15 12" shape-rendering="crispEdges"><rect x="3" y="0" width="6" height="1" fill="#808080"/><rect x="2" y="1" width="1" height="1" fill="#808080"/><rect x="3" y="1" width="6" height="1" fill="#fff"/><rect x="9" y="1" width="1" height="1" fill="#808080"/><rect x="1" y="2" width="1" height="1" fill="#808080"/><rect x="2" y="2" width="1" height="1" fill="#fff"/><rect x="3" y="2" width="1" height="1" fill="#ffff00"/><rect x="4" y="2" width="1" height="1" fill="#a8a8b8"/><rect x="5" y="2" width="1" height="1" fill="#ffff00"/><rect x="6" y="2" width="1" height="1" fill="#a8a8b8"/><rect x="7" y="2" width="1" height="1" fill="#ffff00"/><rect x="8" y="2" width="1" height="1" fill="#a8a8b8"/><rect x="9" y="2" width="1" height="1" fill="#ffff00"/><rect x="10" y="2" width="5" height="1" fill="#808080"/><rect x="1" y="3" width="1" height="1" fill="#808080"/><rect x="2" y="3" width="1" height="1" fill="#fff"/><rect x="3" y="3" width="1" height="1" fill="#a8a8b8"/><rect x="4" y="3" width="1" height="1" fill="#ffff00"/><rect x="5" y="3" width="1" height="1" fill="#a8a8b8"/><rect x="6" y="3" width="1" height="1" fill="#ffff00"/><rect x="7" y="3" width="1" height="1" fill="#a8a8b8"/><rect x="8" y="3" width="1" height="1" fill="#ffff00"/><rect x="9" y="3" width="1" height="1" fill="#a8a8b8"/><rect x="10" y="3" width="4" height="1" fill="#fff"/><rect x="14" y="3" width="1" height="1" fill="#808080"/><rect x="1" y="4" width="1" height="1" fill="#808080"/><rect x="2" y="4" width="1" height="1" fill="#fff"/><rect x="3" y="4" width="1" height="1" fill="#ffff00"/><rect x="4" y="4" width="1" height="1" fill="#a8a8b8"/><rect x="5" y="4" width="1" height="1" fill="#ffff00"/><rect x="6" y="4" width="1" height="1" fill="#a8a8b8"/><rect x="7" y="4" width="1" height="1" fill="#ffff00"/><rect x="8" y="4" width="1" height="1" fill="#a8a8b8"/><rect x="9" y="4" width="1" height="1" fill="#ffff00"/><rect x="10" y="4" width="1" height="1" fill="#a8a8b8"/><rect x="11" y="4" width="1" height="1" fill="#ffff00"/><rect x="12" y="4" width="1" height="1" fill="#a8a8b8"/><rect x="13" y="4" width="1" height="1" fill="#ffff00"/><rect x="14" y="4" width="1" height="1" fill="#808080"/><rect x="0" y="5" width="13" height="1" fill="#808080"/><rect x="13" y="5" width="1" height="1" fill="#ffff00"/><rect x="14" y="5" width="1" height="1" fill="#808080"/><rect x="0" y="6" width="1" height="1" fill="#808080"/><rect x="1" y="6" width="11" height="1" fill="#fff"/><rect x="12" y="6" width="2" height="1" fill="#000"/><rect x="14" y="6" width="1" height="1" fill="#808080"/><rect x="0" y="7" width="1" height="1" fill="#808080"/><rect x="1" y="7" width="1" height="1" fill="#fff"/><rect x="2" y="7" width="1" height="1" fill="#ffff00"/><rect x="3" y="7" width="1" height="1" fill="#a8a8b8"/><rect x="4" y="7" width="1" height="1" fill="#ffff00"/><rect x="5" y="7" width="1" height="1" fill="#a8a8b8"/><rect x="6" y="7" width="1" height="1" fill="#ffff00"/><rect x="7" y="7" width="1" height="1" fill="#a8a8b8"/><rect x="8" y="7" width="1" height="1" fill="#ffff00"/><rect x="9" y="7" width="1" height="1" fill="#a8a8b8"/><rect x="10" y="7" width="1" height="1" fill="#ffff00"/><rect x="11" y="7" width="1" height="1" fill="#a8a8b8"/><rect x="12" y="7" width="1" height="1" fill="#ffff00"/><rect x="13" y="7" width="1" height="1" fill="#000"/><rect x="14" y="7" width="1" height="1" fill="#808080"/><rect x="1" y="8" width="1" height="1" fill="#808080"/><rect x="2" y="8" width="1" height="1" fill="#ffff00"/><rect x="3" y="8" width="1" height="1" fill="#a8a8b8"/><rect x="4" y="8" width="1" height="1" fill="#ffff00"/><rect x="5" y="8" width="1" height="1" fill="#a8a8b8"/><rect x="6" y="8" width="1" height="1" fill="#ffff00"/><rect x="7" y="8" width="1" height="1" fill="#a8a8b8"/><rect x="8" y="8" width="1" height="1" fill="#ffff00"/><rect x="9" y="8" width="1" height="1" fill="#a8a8b8"/><rect x="10" y="8" width="1" height="1" fill="#ffff00"/><rect x="11" y="8" width="1" height="1" fill="#a8a8b8"/><rect x="12" y="8" width="1" height="1" fill="#ffff00"/><rect x="13" y="8" width="2" height="1" fill="#000"/><rect x="1" y="9" width="1" height="1" fill="#808080"/><rect x="2" y="9" width="1" height="1" fill="#fff"/><rect x="3" y="9" width="1" height="1" fill="#ffff00"/><rect x="4" y="9" width="1" height="1" fill="#a8a8b8"/><rect x="5" y="9" width="1" height="1" fill="#ffff00"/><rect x="6" y="9" width="1" height="1" fill="#a8a8b8"/><rect x="7" y="9" width="1" height="1" fill="#ffff00"/><rect x="8" y="9" width="1" height="1" fill="#a8a8b8"/><rect x="9" y="9" width="1" height="1" fill="#ffff00"/><rect x="10" y="9" width="1" height="1" fill="#a8a8b8"/><rect x="11" y="9" width="1" height="1" fill="#ffff00"/><rect x="12" y="9" width="1" height="1" fill="#a8a8b8"/><rect x="13" y="9" width="1" height="1" fill="#ffff00"/><rect x="14" y="9" width="1" height="1" fill="#000"/><rect x="2" y="10" width="1" height="1" fill="#808080"/><rect x="3" y="10" width="1" height="1" fill="#ffff00"/><rect x="4" y="10" width="1" height="1" fill="#a8a8b8"/><rect x="5" y="10" width="1" height="1" fill="#ffff00"/><rect x="6" y="10" width="1" height="1" fill="#a8a8b8"/><rect x="7" y="10" width="1" height="1" fill="#ffff00"/><rect x="8" y="10" width="1" height="1" fill="#a8a8b8"/><rect x="9" y="10" width="1" height="1" fill="#ffff00"/><rect x="10" y="10" width="1" height="1" fill="#a8a8b8"/><rect x="11" y="10" width="1" height="1" fill="#ffff00"/><rect x="12" y="10" width="1" height="1" fill="#a8a8b8"/><rect x="13" y="10" width="1" height="1" fill="#ffff00"/><rect x="3" y="11" width="12" height="1" fill="#808080"/></svg>
<svg style="left:42px;top:82px;" width="15" height="12" viewBox="0 0 15 12" shape-rendering="crispEdges"><rect x="3" y="0" width="6" height="1" fill="#808080"/><rect x="2" y="1" width="1" height="1" fill="#808080"/><rect x="3" y="1" width="6" height="1" fill="#fff"/><rect x="9" y="1" width="1" height="1" fill="#808080"/><rect x="1" y="2" width="1" height="1" fill="#808080"/><rect x="2" y="2" width="1" height="1" fill="#fff"/><rect x="3" y="2" width="1" height="1" fill="#ffff00"/><rect x="4" y="2" width="1" height="1" fill="#a8a8b8"/><rect x="5" y="2" width="1" height="1" fill="#ffff00"/><rect x="6" y="2" width="1" height="1" fill="#a8a8b8"/><rect x="7" y="2" width="1" height="1" fill="#ffff00"/><rect x="8" y="2" width="1" height="1" fill="#a8a8b8"/><rect x="9" y="2" width="1" height="1" fill="#ffff00"/><rect x="10" y="2" width="5" height="1" fill="#808080"/><rect x="1" y="3" width="1" height="1" fill="#808080"/><rect x="2" y="3" width="1" height="1" fill="#fff"/><rect x="3" y="3" width="1" height="1" fill="#a8a8b8"/><rect x="4" y="3" width="1" height="1" fill="#ffff00"/><rect x="5" y="3" width="1" height="1" fill="#a8a8b8"/><rect x="6" y="3" width="1" height="1" fill="#ffff00"/><rect x="7" y="3" width="1" height="1" fill="#a8a8b8"/><rect x="8" y="3" width="1" height="1" fill="#ffff00"/><rect x="9" y="3" width="1" height="1" fill="#a8a8b8"/><rect x="10" y="3" width="4" height="1" fill="#fff"/><rect x="14" y="3" width="1" height="1" fill="#808080"/><rect x="1" y="4" width="1" height="1" fill="#808080"/><rect x="2" y="4" width="1" height="1" fill="#fff"/><rect x="3" y="4" width="1" height="1" fill="#ffff00"/><rect x="4" y="4" width="1" height="1" fill="#a8a8b8"/><rect x="5" y="4" width="1" height="1" fill="#ffff00"/><rect x="6" y="4" width="1" height="1" fill="#a8a8b8"/><rect x="7" y="4" width="1" height="1" fill="#ffff00"/><rect x="8" y="4" width="1" height="1" fill="#a8a8b8"/><rect x="9" y="4" width="1" height="1" fill="#ffff00"/><rect x="10" y="4" width="1" height="1" fill="#a8a8b8"/><rect x="11" y="4" width="1" height="1" fill="#ffff00"/><rect x="12" y="4" width="1" height="1" fill="#a8a8b8"/><rect x="13" y="4" width="1" height="1" fill="#ffff00"/><rect x="14" y="4" width="1" height="1" fill="#808080"/><rect x="0" y="5" width="13" height="1" fill="#808080"/><rect x="13" y="5" width="1" height="1" fill="#ffff00"/><rect x="14" y="5" width="1" height="1" fill="#808080"/><rect x="0" y="6" width="1" height="1" fill="#808080"/><rect x="1" y="6" width="11" height="1" fill="#fff"/><rect x="12" y="6" width="2" height="1" fill="#000"/><rect x="14" y="6" width="1" height="1" fill="#808080"/><rect x="0" y="7" width="1" height="1" fill="#808080"/><rect x="1" y="7" width="1" height="1" fill="#fff"/><rect x="2" y="7" width="1" height="1" fill="#ffff00"/><rect x="3" y="7" width="1" height="1" fill="#a8a8b8"/><rect x="4" y="7" width="1" height="1" fill="#ffff00"/><rect x="5" y="7" width="1" height="1" fill="#a8a8b8"/><rect x="6" y="7" width="1" height="1" fill="#ffff00"/><rect x="7" y="7" width="1" height="1" fill="#a8a8b8"/><rect x="8" y="7" width="1" height="1" fill="#ffff00"/><rect x="9" y="7" width="1" height="1" fill="#a8a8b8"/><rect x="10" y="7" width="1" height="1" fill="#ffff00"/><rect x="11" y="7" width="1" height="1" fill="#a8a8b8"/><rect x="12" y="7" width="1" height="1" fill="#ffff00"/><rect x="13" y="7" width="1" height="1" fill="#000"/><rect x="14" y="7" width="1" height="1" fill="#808080"/><rect x="1" y="8" width="1" height="1" fill="#808080"/><rect x="2" y="8" width="1" height="1" fill="#ffff00"/><rect x="3" y="8" width="1" height="1" fill="#a8a8b8"/><rect x="4" y="8" width="1" height="1" fill="#ffff00"/><rect x="5" y="8" width="1" height="1" fill="#a8a8b8"/><rect x="6" y="8" width="1" height="1" fill="#ffff00"/><rect x="7" y="8" width="1" height="1" fill="#a8a8b8"/><rect x="8" y="8" width="1" height="1" fill="#ffff00"/><rect x="9" y="8" width="1" height="1" fill="#a8a8b8"/><rect x="10" y="8" width="1" height="1" fill="#ffff00"/><rect x="11" y="8" width="1" height="1" fill="#a8a8b8"/><rect x="12" y="8" width="1" height="1" fill="#ffff00"/><rect x="13" y="8" width="2" height="1" fill="#000"/><rect x="1" y="9" width="1" height="1" fill="#808080"/><rect x="2" y="9" width="1" height="1" fill="#fff"/><rect x="3" y="9" width="1" height="1" fill="#ffff00"/><rect x="4" y="9" width="1" height="1" fill="#a8a8b8"/><rect x="5" y="9" width="1" height="1" fill="#ffff00"/><rect x="6" y="9" width="1" height="1" fill="#a8a8b8"/><rect x="7" y="9" width="1" height="1" fill="#ffff00"/><rect x="8" y="9" width="1" height="1" fill="#a8a8b8"/><rect x="9" y="9" width="1" height="1" fill="#ffff00"/><rect x="10" y="9" width="1" height="1" fill="#a8a8b8"/><rect x="11" y="9" width="1" height="1" fill="#ffff00"/><rect x="12" y="9" width="1" height="1" fill="#a8a8b8"/><rect x="13" y="9" width="1" height="1" fill="#ffff00"/><rect x="14" y="9" width="1" height="1" fill="#000"/><rect x="2" y="10" width="1" height="1" fill="#808080"/><rect x="3" y="10" width="1" height="1" fill="#ffff00"/><rect x="4" y="10" width="1" height="1" fill="#a8a8b8"/><rect x="5" y="10" width="1" height="1" fill="#ffff00"/><rect x="6" y="10" width="1" height="1" fill="#a8a8b8"/><rect x="7" y="10" width="1" height="1" fill="#ffff00"/><rect x="8" y="10" width="1" height="1" fill="#a8a8b8"/><rect x="9" y="10" width="1" height="1" fill="#ffff00"/><rect x="10" y="10" width="1" height="1" fill="#a8a8b8"/><rect x="11" y="10" width="1" height="1" fill="#ffff00"/><rect x="12" y="10" width="1" height="1" fill="#a8a8b8"/><rect x="13" y="10" width="1" height="1" fill="#ffff00"/><rect x="3" y="11" width="12" height="1" fill="#808080"/></svg>
<svg style="left:59px;top:48px;" width="17" height="14" viewBox="0 0 17 14" shape-rendering="crispEdges"><rect x="9" y="0" width="1" height="1" fill="#000"/><rect x="13" y="0" width="1" height="1" fill="#000"/><rect x="8" y="1" width="1" height="1" fill="#000"/><rect x="9" y="1" width="1" height="1" fill="#ffff00"/><rect x="10" y="1" width="1" height="1" fill="#000"/><rect x="12" y="1" width="1" height="1" fill="#000"/><rect x="13" y="1" width="1" height="1" fill="#ff00ff"/><rect x="14" y="1" width="1" height="1" fill="#000"/><rect x="7" y="2" width="1" height="1" fill="#000"/><rect x="8" y="2" width="2" height="1" fill="#ffff00"/><rect x="10" y="2" width="1" height="1" fill="#000"/><rect x="12" y="2" width="1" height="1" fill="#000"/><rect x="13" y="2" width="2" height="1" fill="#ff00ff"/><rect x="15" y="2" width="1" height="1" fill="#000"/><rect x="7" y="3" width="1" height="1" fill="#000"/><rect x="8" y="3" width="1" height="1" fill="#ffff00"/><rect x="9" y="3" width="1" height="1" fill="#000"/><rect x="10" y="3" width="1" height="1" fill="#ffff00"/><rect x="11" y="3" width="2" height="1" fill="#000"/><rect x="13" y="3" width="1" height="1" fill="#ff00ff"/><rect x="14" y="3" width="1" height="1" fill="#000"/><rect x="15" y="3" width="1" height="1" fill="#ff00ff"/><rect x="16" y="3" width="1" height="1" fill="#000"/><rect x="7" y="4" width="1" height="1" fill="#000"/><rect x="8" y="4" width="2" height="1" fill="#ffff00"/><rect x="10" y="4" width="1" height="1" fill="#000"/><rect x="12" y="4" width="1" height="1" fill="#000"/><rect x="13" y="4" width="2" height="1" fill="#ff00ff"/><rect x="15" y="4" width="1" height="1" fill="#000"/><rect x="6" y="5" width="1" height="1" fill="#000"/><rect x="8" y="5" width="1" height="1" fill="#000"/><rect x="9" y="5" width="1" height="1" fill="#ffff00"/><rect x="10" y="5" width="1" height="1" fill="#000"/><rect x="13" y="5" width="1" height="1" fill="#000"/><rect x="14" y="5" width="1" height="1" fill="#ff00ff"/><rect x="15" y="5" width="1" height="1" fill="#000"/><rect x="5" y="6" width="1" height="1" fill="#000"/><rect x="9" y="6" width="1" height="1" fill="#000"/><rect x="11" y="6" width="1" height="1" fill="#000"/><rect x="13" y="6" width="2" height="1" fill="#000"/><rect x="2" y="7" width="2" height="1" fill="#000"/><rect x="6" y="7" width="1" height="1" fill="#000"/><rect x="10" y="7" width="1" height="1" fill="#000"/><rect x="12" y="7" width="1" height="1" fill="#000"/><rect x="1" y="8" width="1" height="1" fill="#000"/><rect x="2" y="8" width="2" height="1" fill="#ff00ff"/><rect x="4" y="8" width="2" height="1" fill="#000"/><rect x="7" y="8" width="3" height="1" fill="#000"/><rect x="11" y="8" width="1" height="1" fill="#000"/><rect x="1" y="9" width="1" height="1" fill="#000"/><rect x="2" y="9" width="1" height="1" fill="#ff00ff"/><rect x="3" y="9" width="1" height="1" fill="#000"/><rect x="4" y="9" width="1" height="1" fill="#ff00ff"/><rect x="5" y="9" width="1" height="1" fill="#000"/><rect x="6" y="9" width="3" height="1" fill="#00e000"/><rect x="9" y="9" width="2" height="1" fill="#000"/><rect x="12" y="9" width="1" height="1" fill="#000"/><rect x="2" y="10" width="1" height="1" fill="#000"/><rect x="3" y="10" width="2" height="1" fill="#ff00ff"/><rect x="5" y="10" width="1" height="1" fill="#000"/><rect x="6" y="10" width="1" height="1" fill="#00e000"/><rect x="7" y="10" width="1" height="1" fill="#000"/><rect x="8" y="10" width="1" height="1" fill="#00e000"/><rect x="9" y="10" width="1" height="1" fill="#000"/><rect x="11" y="10" width="3" height="1" fill="#000"/><rect x="2" y="11" width="1" height="1" fill="#000"/><rect x="3" y="11" width="1" height="1" fill="#ff00ff"/><rect x="4" y="11" width="2" height="1" fill="#000"/><rect x="6" y="11" width="3" height="1" fill="#00e000"/><rect x="9" y="11" width="2" height="1" fill="#000"/><rect x="11" y="11" width="1" height="1" fill="#00ffff"/><rect x="12" y="11" width="1" height="1" fill="#000"/><rect x="13" y="11" width="1" height="1" fill="#00ffff"/><rect x="14" y="11" width="1" height="1" fill="#000"/><rect x="3" y="12" width="2" height="1" fill="#000"/><rect x="6" y="12" width="3" height="1" fill="#000"/><rect x="11" y="12" width="1" height="1" fill="#000"/><rect x="12" y="12" width="1" height="1" fill="#00ffff"/><rect x="13" y="12" width="1" height="1" fill="#000"/><rect x="14" y="12" width="1" height="1" fill="#00ffff"/><rect x="15" y="12" width="1" height="1" fill="#000"/><rect x="12" y="13" width="4" height="1" fill="#000"/></svg>
<svg style="left:21px;top:63px;" width="17" height="16" viewBox="0 0 17 16" shape-rendering="crispEdges"><rect x="13" y="1" width="2" height="1" fill="#000"/><rect x="3" y="2" width="2" height="1" fill="#000"/><rect x="12" y="2" width="1" height="1" fill="#000"/><rect x="13" y="2" width="2" height="1" fill="#00e000"/><rect x="15" y="2" width="1" height="1" fill="#000"/><rect x="3" y="3" width="1" height="1" fill="#000"/><rect x="4" y="3" width="1" height="1" fill="#00ffff"/><rect x="5" y="3" width="2" height="1" fill="#000"/><rect x="12" y="3" width="3" height="1" fill="#000"/><rect x="3" y="4" width="1" height="1" fill="#000"/><rect x="5" y="4" width="2" height="1" fill="#00ffff"/><rect x="7" y="4" width="1" height="1" fill="#000"/><rect x="9" y="4" width="1" height="1" fill="#000"/><rect x="10" y="4" width="2" height="1" fill="#ffff00"/><rect x="12" y="4" width="1" height="1" fill="#000"/><rect x="3" y="5" width="1" height="1" fill="#000"/><rect x="4" y="5" width="1" height="1" fill="#fff"/><rect x="6" y="5" width="1" height="1" fill="#00ffff"/><rect x="7" y="5" width="1" height="1" fill="#000"/><rect x="9" y="5" width="1" height="1" fill="#000"/><rect x="10" y="5" width="2" height="1" fill="#ffff00"/><rect x="12" y="5" width="1" height="1" fill="#000"/><rect x="3" y="6" width="1" height="1" fill="#000"/><rect x="4" y="6" width="1" height="1" fill="#fff"/><rect x="5" y="6" width="1" height="1" fill="#000"/><rect x="6" y="6" width="1" height="1" fill="#00ffff"/><rect x="7" y="6" width="1" height="1" fill="#000"/><rect x="10" y="6" width="2" height="1" fill="#000"/><rect x="13" y="6" width="2" height="1" fill="#000"/><rect x="3" y="7" width="2" height="1" fill="#000"/><rect x="6" y="7" width="1" height="1" fill="#00ffff"/><rect x="7" y="7" width="1" height="1" fill="#000"/><rect x="9" y="7" width="1" height="1" fill="#000"/><rect x="12" y="7" width="1" height="1" fill="#000"/><rect x="13" y="7" width="1" height="1" fill="#ff00ff"/><rect x="14" y="7" width="1" height="1" fill="#000"/><rect x="3" y="8" width="3" height="1" fill="#000"/><rect x="6" y="8" width="2" height="1" fill="#00ffff"/><rect x="8" y="8" width="2" height="1" fill="#000"/><rect x="12" y="8" width="1" height="1" fill="#000"/><rect x="13" y="8" width="1" height="1" fill="#ff00ff"/><rect x="14" y="8" width="1" height="1" fill="#000"/><rect x="4" y="9" width="2" height="1" fill="#000"/><rect x="6" y="9" width="3" height="1" fill="#fff"/><rect x="9" y="9" width="1" height="1" fill="#000"/><rect x="13" y="9" width="1" height="1" fill="#000"/><rect x="1" y="10" width="2" height="1" fill="#000"/><rect x="5" y="10" width="1" height="1" fill="#000"/><rect x="6" y="10" width="3" height="1" fill="#fff"/><rect x="9" y="10" width="1" height="1" fill="#000"/><rect x="10" y="10" width="1" height="1" fill="#00ffff"/><rect x="0" y="11" width="1" height="1" fill="#000"/><rect x="5" y="11" width="3" height="1" fill="#000"/><rect x="10" y="11" width="2" height="1" fill="#00ffff"/><rect x="12" y="11" width="3" height="1" fill="#000"/><rect x="1" y="12" width="1" height="1" fill="#000"/><rect x="8" y="12" width="2" height="1" fill="#000"/><rect x="12" y="12" width="1" height="1" fill="#00ffff"/><rect x="13" y="12" width="3" height="1" fill="#000"/><rect x="2" y="13" width="2" height="1" fill="#000"/><rect x="11" y="13" width="2" height="1" fill="#000"/><rect x="4" y="14" width="2" height="1" fill="#000"/><rect x="9" y="14" width="2" height="1" fill="#000"/><rect x="6" y="15" width="3" height="1" fill="#000"/></svg>
<svg style="left:60px;top:97px;" width="16" height="14" viewBox="0 0 16 14" shape-rendering="crispEdges"><rect x="4" y="0" width="9" height="1" fill="#808080"/><rect x="4" y="1" width="1" height="1" fill="#808080"/><rect x="5" y="1" width="1" height="1" fill="#c8c8c8"/><rect x="13" y="1" width="2" height="1" fill="#000"/><rect x="1" y="2" width="10" height="1" fill="#000"/><rect x="13" y="2" width="1" height="1" fill="#000"/><rect x="14" y="2" width="1" height="1" fill="#fff"/><rect x="15" y="2" width="1" height="1" fill="#000"/><rect x="1" y="3" width="1" height="1" fill="#000"/><rect x="2" y="3" width="2" height="1" fill="#fff"/><rect x="4" y="3" width="1" height="1" fill="#000"/><rect x="5" y="3" width="2" height="1" fill="#fff"/><rect x="7" y="3" width="1" height="1" fill="#000"/><rect x="8" y="3" width="2" height="1" fill="#fff"/><rect x="10" y="3" width="1" height="1" fill="#000"/><rect x="12" y="3" width="4" height="1" fill="#000"/><rect x="1" y="4" width="10" height="1" fill="#000"/><rect x="15" y="4" width="1" height="1" fill="#000"/><rect x="1" y="5" width="1" height="1" fill="#000"/><rect x="2" y="5" width="2" height="1" fill="#fff"/><rect x="4" y="5" width="1" height="1" fill="#000"/><rect x="5" y="5" width="2" height="1" fill="#fff"/><rect x="7" y="5" width="1" height="1" fill="#000"/><rect x="8" y="5" width="2" height="1" fill="#fff"/><rect x="10" y="5" width="1" height="1" fill="#000"/><rect x="15" y="5" width="1" height="1" fill="#000"/><rect x="1" y="6" width="10" height="1" fill="#000"/><rect x="15" y="6" width="1" height="1" fill="#000"/><rect x="1" y="7" width="1" height="1" fill="#000"/><rect x="2" y="7" width="2" height="1" fill="#fff"/><rect x="4" y="7" width="1" height="1" fill="#000"/><rect x="5" y="7" width="2" height="1" fill="#fff"/><rect x="7" y="7" width="1" height="1" fill="#000"/><rect x="8" y="7" width="2" height="1" fill="#fff"/><rect x="10" y="7" width="1" height="1" fill="#000"/><rect x="15" y="7" width="1" height="1" fill="#000"/><rect x="1" y="8" width="10" height="1" fill="#000"/><rect x="15" y="8" width="1" height="1" fill="#000"/><rect x="1" y="9" width="1" height="1" fill="#000"/><rect x="2" y="9" width="2" height="1" fill="#fff"/><rect x="4" y="9" width="1" height="1" fill="#000"/><rect x="5" y="9" width="2" height="1" fill="#fff"/><rect x="7" y="9" width="1" height="1" fill="#000"/><rect x="8" y="9" width="2" height="1" fill="#fff"/><rect x="10" y="9" width="1" height="1" fill="#000"/><rect x="15" y="9" width="1" height="1" fill="#000"/><rect x="1" y="10" width="10" height="1" fill="#000"/><rect x="15" y="10" width="1" height="1" fill="#000"/><rect x="4" y="11" width="1" height="1" fill="#808080"/><rect x="5" y="11" width="1" height="1" fill="#c8c8c8"/><rect x="15" y="11" width="1" height="1" fill="#000"/><rect x="4" y="12" width="1" height="1" fill="#808080"/><rect x="5" y="12" width="10" height="1" fill="#c8c8c8"/><rect x="15" y="12" width="1" height="1" fill="#000"/><rect x="4" y="13" width="12" height="1" fill="#000"/></svg>
<svg style="left:60px;top:113px;" width="16" height="14" viewBox="0 0 16 14" shape-rendering="crispEdges"><rect x="4" y="0" width="9" height="1" fill="#808080"/><rect x="4" y="1" width="1" height="1" fill="#808080"/><rect x="5" y="1" width="1" height="1" fill="#c8c8c8"/><rect x="13" y="1" width="2" height="1" fill="#000"/><rect x="1" y="2" width="10" height="1" fill="#000"/><rect x="13" y="2" width="1" height="1" fill="#000"/><rect x="14" y="2" width="1" height="1" fill="#fff"/><rect x="15" y="2" width="1" height="1" fill="#000"/><rect x="1" y="3" width="1" height="1" fill="#000"/><rect x="2" y="3" width="2" height="1" fill="#fff"/><rect x="4" y="3" width="1" height="1" fill="#000"/><rect x="5" y="3" width="2" height="1" fill="#fff"/><rect x="7" y="3" width="1" height="1" fill="#000"/><rect x="8" y="3" width="2" height="1" fill="#fff"/><rect x="10" y="3" width="1" height="1" fill="#000"/><rect x="12" y="3" width="4" height="1" fill="#000"/><rect x="1" y="4" width="10" height="1" fill="#000"/><rect x="15" y="4" width="1" height="1" fill="#000"/><rect x="1" y="5" width="1" height="1" fill="#000"/><rect x="2" y="5" width="2" height="1" fill="#fff"/><rect x="4" y="5" width="1" height="1" fill="#000"/><rect x="5" y="5" width="2" height="1" fill="#fff"/><rect x="7" y="5" width="1" height="1" fill="#000"/><rect x="8" y="5" width="2" height="1" fill="#fff"/><rect x="10" y="5" width="1" height="1" fill="#000"/><rect x="15" y="5" width="1" height="1" fill="#000"/><rect x="1" y="6" width="10" height="1" fill="#000"/><rect x="15" y="6" width="1" height="1" fill="#000"/><rect x="1" y="7" width="1" height="1" fill="#000"/><rect x="2" y="7" width="2" height="1" fill="#fff"/><rect x="4" y="7" width="1" height="1" fill="#000"/><rect x="5" y="7" width="2" height="1" fill="#fff"/><rect x="7" y="7" width="1" height="1" fill="#000"/><rect x="8" y="7" width="2" height="1" fill="#fff"/><rect x="10" y="7" width="1" height="1" fill="#000"/><rect x="15" y="7" width="1" height="1" fill="#000"/><rect x="1" y="8" width="10" height="1" fill="#000"/><rect x="15" y="8" width="1" height="1" fill="#000"/><rect x="1" y="9" width="1" height="1" fill="#000"/><rect x="2" y="9" width="2" height="1" fill="#fff"/><rect x="4" y="9" width="1" height="1" fill="#000"/><rect x="5" y="9" width="2" height="1" fill="#fff"/><rect x="7" y="9" width="1" height="1" fill="#000"/><rect x="8" y="9" width="2" height="1" fill="#fff"/><rect x="10" y="9" width="1" height="1" fill="#000"/><rect x="15" y="9" width="1" height="1" fill="#000"/><rect x="1" y="10" width="10" height="1" fill="#000"/><rect x="15" y="10" width="1" height="1" fill="#000"/><rect x="4" y="11" width="1" height="1" fill="#808080"/><rect x="5" y="11" width="1" height="1" fill="#c8c8c8"/><rect x="15" y="11" width="1" height="1" fill="#000"/><rect x="4" y="12" width="1" height="1" fill="#808080"/><rect x="5" y="12" width="10" height="1" fill="#c8c8c8"/><rect x="15" y="12" width="1" height="1" fill="#000"/><rect x="4" y="13" width="12" height="1" fill="#000"/></svg>
<svg style="left:60px;top:129px;" width="16" height="14" viewBox="0 0 16 14" shape-rendering="crispEdges"><rect x="4" y="0" width="9" height="1" fill="#808080"/><rect x="4" y="1" width="1" height="1" fill="#808080"/><rect x="5" y="1" width="1" height="1" fill="#c8c8c8"/><rect x="13" y="1" width="2" height="1" fill="#000"/><rect x="1" y="2" width="10" height="1" fill="#000"/><rect x="13" y="2" width="1" height="1" fill="#000"/><rect x="14" y="2" width="1" height="1" fill="#fff"/><rect x="15" y="2" width="1" height="1" fill="#000"/><rect x="1" y="3" width="1" height="1" fill="#000"/><rect x="2" y="3" width="2" height="1" fill="#fff"/><rect x="4" y="3" width="1" height="1" fill="#000"/><rect x="5" y="3" width="2" height="1" fill="#fff"/><rect x="7" y="3" width="1" height="1" fill="#000"/><rect x="8" y="3" width="2" height="1" fill="#fff"/><rect x="10" y="3" width="1" height="1" fill="#000"/><rect x="12" y="3" width="4" height="1" fill="#000"/><rect x="1" y="4" width="10" height="1" fill="#000"/><rect x="15" y="4" width="1" height="1" fill="#000"/><rect x="1" y="5" width="1" height="1" fill="#000"/><rect x="2" y="5" width="2" height="1" fill="#fff"/><rect x="4" y="5" width="1" height="1" fill="#000"/><rect x="5" y="5" width="2" height="1" fill="#fff"/><rect x="7" y="5" width="1" height="1" fill="#000"/><rect x="8" y="5" width="2" height="1" fill="#fff"/><rect x="10" y="5" width="1" height="1" fill="#000"/><rect x="15" y="5" width="1" height="1" fill="#000"/><rect x="1" y="6" width="10" height="1" fill="#000"/><rect x="15" y="6" width="1" height="1" fill="#000"/><rect x="1" y="7" width="1" height="1" fill="#000"/><rect x="2" y="7" width="2" height="1" fill="#fff"/><rect x="4" y="7" width="1" height="1" fill="#000"/><rect x="5" y="7" width="2" height="1" fill="#fff"/><rect x="7" y="7" width="1" height="1" fill="#000"/><rect x="8" y="7" width="2" height="1" fill="#fff"/><rect x="10" y="7" width="1" height="1" fill="#000"/><rect x="15" y="7" width="1" height="1" fill="#000"/><rect x="1" y="8" width="10" height="1" fill="#000"/><rect x="15" y="8" width="1" height="1" fill="#000"/><rect x="1" y="9" width="1" height="1" fill="#000"/><rect x="2" y="9" width="2" height="1" fill="#fff"/><rect x="4" y="9" width="1" height="1" fill="#000"/><rect x="5" y="9" width="2" height="1" fill="#fff"/><rect x="7" y="9" width="1" height="1" fill="#000"/><rect x="8" y="9" width="2" height="1" fill="#fff"/><rect x="10" y="9" width="1" height="1" fill="#000"/><rect x="15" y="9" width="1" height="1" fill="#000"/><rect x="1" y="10" width="10" height="1" fill="#000"/><rect x="15" y="10" width="1" height="1" fill="#000"/><rect x="4" y="11" width="1" height="1" fill="#808080"/><rect x="5" y="11" width="1" height="1" fill="#c8c8c8"/><rect x="15" y="11" width="1" height="1" fill="#000"/><rect x="4" y="12" width="1" height="1" fill="#808080"/><rect x="5" y="12" width="10" height="1" fill="#c8c8c8"/><rect x="15" y="12" width="1" height="1" fill="#000"/><rect x="4" y="13" width="12" height="1" fill="#000"/></svg>
<svg style="left:60px;top:145px;" width="16" height="14" viewBox="0 0 16 14" shape-rendering="crispEdges"><rect x="4" y="0" width="9" height="1" fill="#808080"/><rect x="4" y="1" width="1" height="1" fill="#808080"/><rect x="5" y="1" width="1" height="1" fill="#c8c8c8"/><rect x="13" y="1" width="2" height="1" fill="#000"/><rect x="1" y="2" width="10" height="1" fill="#000"/><rect x="13" y="2" width="1" height="1" fill="#000"/><rect x="14" y="2" width="1" height="1" fill="#fff"/><rect x="15" y="2" width="1" height="1" fill="#000"/><rect x="1" y="3" width="1" height="1" fill="#000"/><rect x="2" y="3" width="2" height="1" fill="#fff"/><rect x="4" y="3" width="1" height="1" fill="#000"/><rect x="5" y="3" width="2" height="1" fill="#fff"/><rect x="7" y="3" width="1" height="1" fill="#000"/><rect x="8" y="3" width="2" height="1" fill="#fff"/><rect x="10" y="3" width="1" height="1" fill="#000"/><rect x="12" y="3" width="4" height="1" fill="#000"/><rect x="1" y="4" width="10" height="1" fill="#000"/><rect x="15" y="4" width="1" height="1" fill="#000"/><rect x="1" y="5" width="1" height="1" fill="#000"/><rect x="2" y="5" width="2" height="1" fill="#fff"/><rect x="4" y="5" width="1" height="1" fill="#000"/><rect x="5" y="5" width="2" height="1" fill="#fff"/><rect x="7" y="5" width="1" height="1" fill="#000"/><rect x="8" y="5" width="2" height="1" fill="#fff"/><rect x="10" y="5" width="1" height="1" fill="#000"/><rect x="15" y="5" width="1" height="1" fill="#000"/><rect x="1" y="6" width="10" height="1" fill="#000"/><rect x="15" y="6" width="1" height="1" fill="#000"/><rect x="1" y="7" width="1" height="1" fill="#000"/><rect x="2" y="7" width="2" height="1" fill="#fff"/><rect x="4" y="7" width="1" height="1" fill="#000"/><rect x="5" y="7" width="2" height="1" fill="#fff"/><rect x="7" y="7" width="1" height="1" fill="#000"/><rect x="8" y="7" width="2" height="1" fill="#fff"/><rect x="10" y="7" width="1" height="1" fill="#000"/><rect x="15" y="7" width="1" height="1" fill="#000"/><rect x="1" y="8" width="10" height="1" fill="#000"/><rect x="15" y="8" width="1" height="1" fill="#000"/><rect x="1" y="9" width="1" height="1" fill="#000"/><rect x="2" y="9" width="2" height="1" fill="#fff"/><rect x="4" y="9" width="1" height="1" fill="#000"/><rect x="5" y="9" width="2" height="1" fill="#fff"/><rect x="7" y="9" width="1" height="1" fill="#000"/><rect x="8" y="9" width="2" height="1" fill="#fff"/><rect x="10" y="9" width="1" height="1" fill="#000"/><rect x="15" y="9" width="1" height="1" fill="#000"/><rect x="1" y="10" width="10" height="1" fill="#000"/><rect x="15" y="10" width="1" height="1" fill="#000"/><rect x="4" y="11" width="1" height="1" fill="#808080"/><rect x="5" y="11" width="1" height="1" fill="#c8c8c8"/><rect x="15" y="11" width="1" height="1" fill="#000"/><rect x="4" y="12" width="1" height="1" fill="#808080"/><rect x="5" y="12" width="10" height="1" fill="#c8c8c8"/><rect x="15" y="12" width="1" height="1" fill="#000"/><rect x="4" y="13" width="12" height="1" fill="#000"/></svg>
<svg style="left:60px;top:161px;" width="16" height="14" viewBox="0 0 16 14" shape-rendering="crispEdges"><rect x="4" y="0" width="9" height="1" fill="#808080"/><rect x="4" y="1" width="1" height="1" fill="#808080"/><rect x="5" y="1" width="1" height="1" fill="#c8c8c8"/><rect x="13" y="1" width="2" height="1" fill="#000"/><rect x="1" y="2" width="10" height="1" fill="#000"/><rect x="13" y="2" width="1" height="1" fill="#000"/><rect x="14" y="2" width="1" height="1" fill="#fff"/><rect x="15" y="2" width="1" height="1" fill="#000"/><rect x="1" y="3" width="1" height="1" fill="#000"/><rect x="2" y="3" width="2" height="1" fill="#fff"/><rect x="4" y="3" width="1" height="1" fill="#000"/><rect x="5" y="3" width="2" height="1" fill="#fff"/><rect x="7" y="3" width="1" height="1" fill="#000"/><rect x="8" y="3" width="2" height="1" fill="#fff"/><rect x="10" y="3" width="1" height="1" fill="#000"/><rect x="12" y="3" width="4" height="1" fill="#000"/><rect x="1" y="4" width="10" height="1" fill="#000"/><rect x="15" y="4" width="1" height="1" fill="#000"/><rect x="1" y="5" width="1" height="1" fill="#000"/><rect x="2" y="5" width="2" height="1" fill="#fff"/><rect x="4" y="5" width="1" height="1" fill="#000"/><rect x="5" y="5" width="2" height="1" fill="#fff"/><rect x="7" y="5" width="1" height="1" fill="#000"/><rect x="8" y="5" width="2" height="1" fill="#fff"/><rect x="10" y="5" width="1" height="1" fill="#000"/><rect x="15" y="5" width="1" height="1" fill="#000"/><rect x="1" y="6" width="10" height="1" fill="#000"/><rect x="15" y="6" width="1" height="1" fill="#000"/><rect x="1" y="7" width="1" height="1" fill="#000"/><rect x="2" y="7" width="2" height="1" fill="#fff"/><rect x="4" y="7" width="1" height="1" fill="#000"/><rect x="5" y="7" width="2" height="1" fill="#fff"/><rect x="7" y="7" width="1" height="1" fill="#000"/><rect x="8" y="7" width="2" height="1" fill="#fff"/><rect x="10" y="7" width="1" height="1" fill="#000"/><rect x="15" y="7" width="1" height="1" fill="#000"/><rect x="1" y="8" width="10" height="1" fill="#000"/><rect x="15" y="8" width="1" height="1" fill="#000"/><rect x="1" y="9" width="1" height="1" fill="#000"/><rect x="2" y="9" width="2" height="1" fill="#fff"/><rect x="4" y="9" width="1" height="1" fill="#000"/><rect x="5" y="9" width="2" height="1" fill="#fff"/><rect x="7" y="9" width="1" height="1" fill="#000"/><rect x="8" y="9" width="2" height="1" fill="#fff"/><rect x="10" y="9" width="1" height="1" fill="#000"/><rect x="15" y="9" width="1" height="1" fill="#000"/><rect x="1" y="10" width="10" height="1" fill="#000"/><rect x="15" y="10" width="1" height="1" fill="#000"/><rect x="4" y="11" width="1" height="1" fill="#808080"/><rect x="5" y="11" width="1" height="1" fill="#c8c8c8"/><rect x="15" y="11" width="1" height="1" fill="#000"/><rect x="4" y="12" width="1" height="1" fill="#808080"/><rect x="5" y="12" width="10" height="1" fill="#c8c8c8"/><rect x="15" y="12" width="1" height="1" fill="#000"/><rect x="4" y="13" width="12" height="1" fill="#000"/></svg>
<div class="t" style="left:81px;top:0px;font-size:10.65px;">Sheet103 (Closest match)</div>
<div class="t" style="left:81px;top:16px;font-size:10.65px;">ThisWorkbook</div>
<div class="t" style="left:61px;top:32px;font-size:10.65px;">Modules</div>
<div class="t" style="left:81px;top:48px;font-size:10.65px;">Module1</div>
<div class="t" style="left:43px;top:64px;font-size:10.65px;font-size:11px;letter-spacing:0.45px"><b>VBAProject (Short-Repair-Data.xlsm)</b></div>
<div class="t" style="left:61px;top:80px;font-size:10.65px;">Microsoft Excel Objects</div>
<div class="t" style="left:81px;top:96px;font-size:10.65px;">Sheet1 (Get first name)</div>
<div class="t" style="left:81px;top:112px;font-size:10.65px;">Sheet10 (Get integer part)</div>
<div class="t" style="left:81px;top:128px;font-size:10.65px;">Sheet100 (Replace a character)</div>
<div class="t" style="left:81px;top:144px;font-size:10.65px;">Sheet101 (Populate drop down)</div>
<div class="t" style="left:81px;top:160px;font-size:10.65px;">Sheet102 (Average by group)</div>
</div>
<div style="left:192px;top:132px;width:16px;height:171px;background:#f0f0f0"></div>
<div style="left:192px;top:152px;width:15px;height:16px;background:#cdcdcd"></div>
<div style="left:3px;top:303px;width:205px;height:16px;background:#f0f0f0"></div>
<div style="left:20px;top:303px;width:98px;height:15px;background:#cdcdcd"></div>
<svg style="left:196px;top:137px;" width="8" height="8" viewBox="0 0 8 8"><path d="M0.8 6L4 2.5L7.2 6" stroke="#606060" fill="none" stroke-width="2.2"/></svg>
<svg style="left:196px;top:290px;" width="8" height="8" viewBox="0 0 8 8"><path d="M0.8 2L4 5.5L7.2 2" stroke="#606060" fill="none" stroke-width="2.2"/></svg>
<svg style="left:7px;top:306px;" width="8" height="8" viewBox="0 0 8 8"><path d="M6 0.8L2.5 4L6 7.2" stroke="#606060" fill="none" stroke-width="2.2"/></svg>
<svg style="left:179px;top:306px;" width="8" height="8" viewBox="0 0 8 8"><path d="M2 0.8L5.5 4L2 7.2" stroke="#606060" fill="none" stroke-width="2.2"/></svg>
<div style="left:216px;top:594px;width:756px;height:22px;background:#99b4d1"></div>
<div class="t" style="left:217px;top:595px;font-size:12px">Immediate</div>
<div style="left:952px;top:595px;width:20px;height:20px;background:#f0f0f0;border-top:1px solid #fff;border-left:1px solid #fff;border-right:1px solid #696969;border-bottom:1px solid #696969;box-shadow:inset -1px -1px 0 #a0a0a0"></div>
<svg style="left:956px;top:599px;" width="11" height="11" viewBox="0 0 11 11"><path d="M1 1L10 10M10 1L1 10" stroke="#000" stroke-width="2" stroke-linecap="square"/></svg>
<div style="left:216px;top:617px;width:756px;height:58px;background:#fff;border-top:1px solid #a0a0a0;border-left:1px solid #a0a0a0;box-shadow:inset 1px 1px 0 #696969"></div>
<div style="left:229px;top:621px;width:1px;height:16px;background:#000"></div>
<div style="left:955px;top:619px;width:16px;height:56px;background:#f0f0f0"></div>
<svg style="left:958px;top:624px;" width="8" height="8" viewBox="0 0 8 8"><path d="M0.8 6L4 2.5L7.2 6" stroke="#606060" fill="none" stroke-width="2.2"/></svg>
<svg style="left:958px;top:647px;" width="8" height="8" viewBox="0 0 8 8"><path d="M0.8 2L4 5.5L7.2 2" stroke="#606060" fill="none" stroke-width="2.2"/></svg>
<div style="left:218px;top:659px;width:737px;height:16px;background:#f0f0f0"></div>
<div style="left:235px;top:660px;width:61px;height:15px;background:#cdcdcd"></div>
<svg style="left:223px;top:663px;" width="8" height="8" viewBox="0 0 8 8"><path d="M6 0.8L2.5 4L6 7.2" stroke="#606060" fill="none" stroke-width="2.2"/></svg>
<svg style="left:943px;top:663px;" width="8" height="8" viewBox="0 0 8 8"><path d="M2 0.8L5.5 4L2 7.2" stroke="#606060" fill="none" stroke-width="2.2"/></svg>
</body></html>
